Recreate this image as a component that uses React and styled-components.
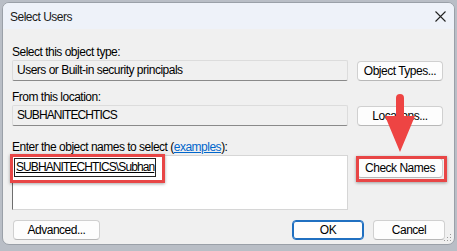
import styled, { createGlobalStyle } from "styled-components";

const Global = createGlobalStyle`
html, body {
  margin: 0;
  padding: 0;
  background: #b9bec6;
  width: 457px;
  height: 251px;
  overflow: hidden;
}
* { box-sizing: border-box; }
`

const Screen = styled.div`
width: 457px;
height: 251px;
padding: 2px 2px 6px 2px;
`

const Window = styled.div`
position: relative;
width: 453px;
height: 243px;
background: #f0f0f0;
border: 1px solid #9aa0a8;
border-radius: 7px;
overflow: hidden;
font-family: "Liberation Sans", Arial, sans-serif;
font-size: 12px;
letter-spacing: -0.5px;
color: #000;
`

const TitleBar = styled.div`
height: 26px;
background: #eef2f9;
display: flex;
align-items: center;
justify-content: space-between;
padding: 1px 8px 0 7px;
`

const Title = styled.span`
font-size: 12px;
color: #1a1a1a;
`

const Content = styled.div`
padding: 15px 9px 0 9px;
`

const Label = styled.div`
height: 16px;
line-height: 16px;
margin-top: ${p => p.$top || 0}px;
white-space: nowrap;
`

const Link = styled.span`
color: #0066cc;
text-decoration: underline;
`

const Row = styled.div`
display: grid;
grid-template-columns: 336px 86px;
column-gap: 9px;
align-items: start;
`

const ReadField = styled.div`
height: 21px;
border: 1px solid #dcdcdc;
border-bottom-color: #8a8a8a;
border-radius: 2px;
padding-left: 4px;
line-height: 19px;
white-space: nowrap;
letter-spacing: ${p => (p.$caps ? "-0.9px" : "inherit")};
`

const NameBox = styled.div`
height: 55px;
background: #fff;
border: 1px solid #d6d6d6;
border-left: 1px solid #6e6e6e;
padding: 2px 0 0 1px;
`

const Entered = styled.span`
display: inline-block;
border: 1px solid #222;
padding: 0 1px;
height: 19px;
line-height: 17px;
letter-spacing: -0.9px;
text-decoration: underline;
`

const Button = styled.div`
height: 20px;
margin-top: ${p => p.$top || 0}px;
background: #fdfdfd;
border: 1px solid ${p => (p.$primary ? "#1f6fc0" : "#d0d0d0")};
border-bottom-color: ${p => (p.$primary ? "#1f6fc0" : "#b8b8b8")};
box-shadow: ${p => (p.$primary ? "inset 0 0 0 1px #1f6fc0" : "none")};
border-radius: 4px;
display: flex;
align-items: center;
justify-content: center;
white-space: nowrap;
width: ${p => (p.$w ? p.$w + "px" : "auto")};
`

const Footer = styled.div`
display: flex;
align-items: center;
margin-top: 10px;
padding-left: 1px;
`

const Spacer = styled.div`
flex: 1;
`

const FooterRight = styled.div`
display: flex;
gap: 9px;
`

const Highlight = styled.div`
position: absolute;
left: ${p => p.$x}px;
top: ${p => p.$y}px;
width: ${p => p.$w}px;
height: ${p => p.$h}px;
border: 3px solid #e84646;
box-shadow: 0 1px 3px rgba(0,0,0,0.35);
pointer-events: none;
`

const Arrow = styled.svg`
position: absolute;
left: 378px;
top: 89px;
pointer-events: none;
`

const Grip = styled.svg`
position: absolute;
right: 2px;
bottom: 2px;
`

const App = () => {
  return (
    <Screen>
      <Global />
      <Window>
        <TitleBar>
          <Title>Select Users</Title>
          <svg width="11" height="11" viewBox="0 0 11 11">
            <path d="M0.5 0.5 L10.5 10.5 M10.5 0.5 L0.5 10.5" stroke="#222" strokeWidth="1.1" />
          </svg>
        </TitleBar>
        <Content>
          <Label>Select this object type:</Label>
          <Row>
            <ReadField>Users or Built-in security principals</ReadField>
            <Button $top={1}>Object Types...</Button>
          </Row>

          <Label $top={8}>From this location:</Label>
          <Row>
            <ReadField $caps>SUBHANITECHTICS</ReadField>
            <Button $top={1}>Locations...</Button>
          </Row>

          <Label $top={13}>Enter the object names to select (<Link>examples</Link>):</Label>
          <Row>
            <NameBox>
              <Entered>SUBHANITECHTICS\Subhan</Entered>
            </NameBox>
            <Button $top={3}>Check Names</Button>
          </Row>

          <Footer>
            <Button $w={87}>Advanced...</Button>
            <Spacer />
            <FooterRight>
              <Button $w={72} $primary>OK</Button>
              <Button $w={72}>Cancel</Button>
            </FooterRight>
          </Footer>
        </Content>

        <Highlight $x={7} $y={151} $w={155} $h={29} />
        <Highlight $x={353} $y={153} $w={91} $h={26} />

        <Arrow width="40" height="64" viewBox="0 0 40 64">
          <path d="M15 6 Q15 2 19 2 Q23 2 23 6 L23 24 L34 24 L19 60 L4 24 L15 24 Z" fill="#ee4443" />
        </Arrow>

        <Grip width="8" height="8" viewBox="0 0 8 8">
          <g fill="#9a9a9a">
            <rect x="6" y="0" width="1" height="1" />
            <rect x="3" y="3" width="1" height="1" />
            <rect x="6" y="3" width="1" height="1" />
            <rect x="0" y="6" width="1" height="1" />
            <rect x="3" y="6" width="1" height="1" />
            <rect x="6" y="6" width="1" height="1" />
          </g>
        </Grip>
      </Window>
    </Screen>
  );
};

export default App;
